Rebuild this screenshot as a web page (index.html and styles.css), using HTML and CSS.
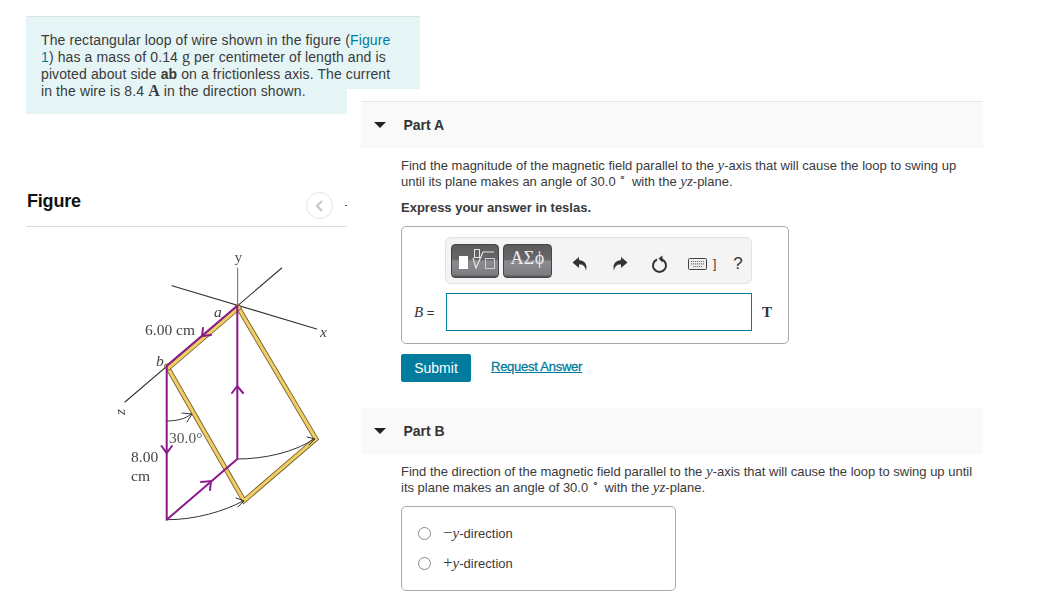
FILE: index.html
```html
<!DOCTYPE html>
<html lang="en">
<head>
<meta charset="utf-8">
<title>Rectangular loop of wire</title>
<link rel="stylesheet" href="styles.css">
</head>
<body>
<div class="page">
  <aside class="left">
    <div class="intro">The rectangular loop of wire shown in the figure (<a class="fig-link" href="#">Figure 1</a>) has a mass of 0.14 <span class="unit">g</span> per centimeter of length and is pivoted about side <b>ab</b> on a frictionless axis. The current in the wire is 8.4 <span class="unit bold">A</span> in the direction shown.</div>
    <div class="fig-head">
      <h2 class="fig-title">Figure</h2>
      <div class="fig-nav">
        <span class="circle-btn">
          <svg width="12" height="14" viewBox="0 0 12 14"><path d="M8 2 3 7l5 5" fill="none" stroke="#c4c4c4" stroke-width="2"/></svg>
        </span>
        <span class="next-dot"></span>
      </div>
    </div>
    <svg class="figure" width="321" height="372" viewBox="26 228 321 372">
      <g fill="none" stroke-linecap="round">
        <path d="M172 286.7 316.7 330" stroke="#333" stroke-width="1.1"/>
        <path d="M281.7 269 125 403" stroke="#333" stroke-width="1.1"/>
        <path d="M237.6 269V306" stroke="#777" stroke-width="1.1"/>
        <path d="M237.3 307 316 440 244 501.7 166.7 367" stroke="#6b5a2a" stroke-width="4.800" stroke-linejoin="miter"/>
        <path d="M237.3 307 316 440 244 501.7 166.7 367" stroke="#f0ce64" stroke-width="3.200" stroke-linejoin="miter"/>
        <path d="M239 308.500 168.500 369" stroke="#6b5a2a" stroke-width="4.800"/>
        <path d="M239 308.500 168.500 369" stroke="#f0ce64" stroke-width="3.200"/>
        <path d="M237.3 460C265 460 295 453 314 440" stroke="#333" stroke-width="1"/>
        <path d="M307 438 315 440 309 446" stroke="#333" stroke-width="1"/>
        <path d="M166.7 520.7C195 521 225 512 243 502" stroke="#333" stroke-width="1"/>
        <path d="M236 499 244 501.7 238 508" stroke="#333" stroke-width="1"/>
        <path d="M166.7 422C176 422 186 420 191 415" stroke="#333" stroke-width="1"/>
        <path d="M182 414 192 415 187 423" stroke="#333" stroke-width="1"/>
        <g stroke="#8c1a8c" stroke-width="2">
          <path d="M237.3 306.7 166.7 366.7V520.7L237.3 460V306.7" stroke-linejoin="round"/>
          <path d="M203 329 202 337 211 336"/>
          <path d="M161.500 447 166.700 454 172 447"/>
          <path d="M201 483 211 482 210 491"/>
          <path d="M232 394 237.300 387 243 394"/>
        </g>
      </g>
      <g class="fig-text">
        <text x="234.500" y="263" class="gray">y</text>
        <text x="320" y="338" class="ital">x</text>
        <text x="214" y="318" class="ital">a</text>
        <text x="145" y="336">6.00 cm</text>
        <text x="156" y="367" class="ital">b</text>
        <text x="0" y="0" class="ital" transform="translate(125 416) rotate(-90)">z</text>
        <text x="169" y="444" class="gray">30.0°</text>
        <text x="131" y="463">8.00</text>
        <text x="131" y="482">cm</text>
      </g>
    </svg>
  </aside>

  <main class="right">
    <section class="part">
      <header class="part-head part-head-first">
        <span class="caret"></span>
        <h3 class="part-title">Part A</h3>
      </header>
      <div class="part-body">
        <p class="prompt">Find the magnitude of the magnetic field parallel to the <i class="m">y</i>-axis that will cause the loop to swing up until its plane makes an angle of 30.0 <sup class="deg">∘</sup> with the <i class="m">yz</i>-plane.</p>
        <p class="hint">Express your answer in teslas.</p>
        <div class="answer">
          <div class="toolbar">
            <button class="tool-btn tool-math" type="button" aria-label="Templates">
              <svg width="46" height="32" viewBox="0 0 46 32">
                <rect x="7" y="11" width="9" height="13" fill="#fff"/>
                <rect x="22.500" y="4.500" width="5" height="8" fill="none" stroke="#e8e8e8"/>
                <path d="M21 13l3 10 7-16H42" fill="none" stroke="#e8e8e8" stroke-width="1.200"/>
                <rect x="33.500" y="13.500" width="9" height="10" fill="none" stroke="#cfcfcf"/>
              </svg>
            </button>
            <button class="tool-btn tool-greek" type="button">ΑΣϕ</button>
            <span class="tool-icons">
              <svg class="ic-undo" width="16" height="16" viewBox="0 0 16 16"><path d="M7 1 .5 6.500 7 12V8.500c3.500-.5 6 1 7 6 1.500-5-.5-10-7-10.500z" fill="#333"/></svg>
              <svg class="ic-redo" width="16" height="16" viewBox="0 0 16 16"><path d="M9 1l6.500 5.500L9 12V8.500c-3.500-.5-6 1-7 6-1.500-5 .5-10 7-10.500z" fill="#333"/></svg>
              <svg class="ic-reset" width="18" height="18" viewBox="0 0 18 18"><path d="M6 4.500a6.500 6.500 0 1 0 5 0" fill="none" stroke="#333" stroke-width="2"/><path d="M11.500 .5v7L7.500 3.500z" fill="#333"/></svg>
              <svg class="ic-keys" width="19" height="12" viewBox="0 0 19 12"><rect x=".5" y=".5" width="18" height="11" rx="1" fill="#eee" stroke="#444"/><path d="M3 3.500h13M3 5.800h13M5 8.500h9" stroke="#777" stroke-width="1.200" stroke-dasharray="1.200 .8"/></svg>
              <span class="ic-bracket">]</span>
              <span class="ic-help">?</span>
            </span>
          </div>
          <div class="answer-row">
            <label class="answer-label"><i class="m big">B</i> =</label>
            <input class="answer-input" type="text" aria-label="B">
            <span class="answer-unit">T</span>
          </div>
        </div>
        <div class="actions">
          <button class="submit" type="button">Submit</button>
          <a class="request" href="#">Request Answer</a>
        </div>
      </div>
    </section>

    <section class="part part-b">
      <header class="part-head">
        <span class="caret"></span>
        <h3 class="part-title">Part B</h3>
      </header>
      <div class="part-body">
        <p class="prompt">Find the direction of the magnetic field parallel to the <i class="m">y</i>-axis that will cause the loop to swing up until its plane makes an angle of 30.0 <sup class="deg">∘</sup> with the <i class="m">yz</i>-plane.</p>
        <div class="choices">
          <label class="choice"><span class="radio"></span><span><span class="m-up">−</span><i class="m">y</i>-direction</span></label>
          <label class="choice"><span class="radio"></span><span><span class="m-up">+</span><i class="m">y</i>-direction</span></label>
        </div>
      </div>
    </section>
  </main>
</div>
</body>
</html>
```
FILE: styles.css
```css
* { box-sizing: border-box; }
html, body { margin: 0; height: 600px; overflow: hidden; background: #fff; }
body { font-family: "Liberation Sans", Arial, sans-serif; font-size: 14px; color: #333; }

.page { display: flex; align-items: flex-start; padding-left: 26px; }

/* left column */
.left { width: 321px; flex: none; padding-top: 16px; }
.intro {
  width: 394px;
  padding: 15px 26px 14px 15px;
  background: #e5f5f6;
  border-top: 1px solid #dde3e4;
  line-height: 17px;
  letter-spacing: .11px;
  color: #3a3a3a;
}
.fig-link { color: #007c9e; text-decoration: none; }
.unit { font-family: "Liberation Serif", serif; font-size: 16px; line-height: 0; }
.unit.bold { font-weight: bold; }
.fig-head {
  display: flex;
  justify-content: space-between;
  height: 40px;
  margin-top: 73px;
  border-bottom: 1px solid #dcdcdc;
}
.fig-title { margin: 0 0 0 1px; font-size: 18px; line-height: 28px; font-weight: bold; letter-spacing: -.2px; color: #111; }
.fig-nav { display: flex; align-items: flex-start; padding-top: 5px; gap: 12px; }
.circle-btn {
  width: 27px; height: 27px;
  display: flex; align-items: center; justify-content: center;
  border: 1px solid #e4e4e4; border-radius: 50%;
}
.next-dot { width: 2px; height: 1px; margin-top: 13px; background: #555; }
.figure { display: block; filter: blur(.3px); }
.fig-text text { font-family: "Liberation Serif", serif; font-size: 15.500px; fill: #444; }
.fig-text .ital { font-style: italic; }
.fig-text .gray { fill: #555; }

/* right column */
.right {
  width: 636px; flex: none;
  margin-top: 89px;
  padding: 12px 0 0 14px;
  background: #fff;
  position: relative;
  z-index: 1;
}
.part-head {
  display: flex; align-items: center;
  height: 46px;
  padding-left: 13px;
  background: #f9f9f9;
}
.part-head-first { height: 47px; border-top: 1px solid #e6e6e6; }
.caret {
  width: 0; height: 0;
  border-left: 6px solid transparent;
  border-right: 6px solid transparent;
  border-top: 6px solid #222;
}
.part-title { margin: 0 0 0 17.500px; font-size: 14px; font-weight: bold; color: #333; }
.part-body { padding-left: 40px; }
.part-b { margin-top: 26px; }
.prompt { margin: 10px 0 0; font-size: 13px; line-height: 16px; color: #3a3a3a; }
.hint { margin: 10px 0 0; font-size: 13px; line-height: 16px; font-weight: bold; color: #3a3a3a; }
.m { font-family: "Liberation Serif", serif; font-style: italic; font-size: 15px; line-height: 0; }
.m.big { font-size: 15px; }
.deg { margin-right: 2px; font-size: 11px; line-height: 0; font-family: "Liberation Serif", serif; }
.m-up { font-family: "Liberation Serif", serif; font-size: 17px; line-height: 0; }

/* answer box */
.answer {
  width: 388px; height: 118px;
  margin-top: 10px;
  padding: 10px 0 0;
  border: 1px solid #aaa;
  border-radius: 5px;
}
.toolbar {
  display: flex; align-items: center;
  width: 307px; height: 47px;
  margin-left: 43px;
  padding-left: 5px;
  background: #f4f4f4;
  border: 1px solid #e2e2e2;
  border-radius: 6px;
}
.tool-btn {
  height: 34px; padding: 0;
  color: #eee;
  background: linear-gradient(#5b5b5e 0, #68686b 46%, #8b8b90 50%, #7d7d82 92%, #505053 100%);
  border: 1px solid #444;
  border-radius: 4px;
  display: flex; align-items: center; justify-content: center;
}
.tool-math { width: 48px; }
.tool-greek { width: 49px; margin-left: 4px; padding-bottom: 4px; font-family: "Liberation Serif", serif; font-size: 18px; letter-spacing: .4px; }
.tool-icons { display: flex; align-items: center; margin-left: 20px; padding-top: 6px; color: #333; }
.ic-redo { margin-left: 24px; }
.ic-reset { margin-left: 23px; }
.ic-keys { margin-left: 19px; }
.ic-bracket { margin-left: 6px; font-size: 12px; }
.ic-help { margin-left: 17px; font-size: 17px; }
.answer-row { display: flex; align-items: center; margin-top: 9px; }
.answer-label { width: 44px; padding-left: 12px; font-size: 13px; color: #333; }
.answer-input {
  width: 306px; height: 38px; padding: 0;
  border: 1px solid #007c9e;
  background: #fff;
  outline: none;
}
.answer-unit { margin-left: 10px; font-family: "Liberation Serif", serif; font-weight: bold; font-size: 15px; color: #333; }

.actions { display: flex; align-items: center; margin-top: 10px; }
.submit {
  width: 70px; height: 28px; padding: 0;
  background: #007c9e; color: #fff;
  border: 0; border-radius: 2px;
  font: 14px "Liberation Sans", Arial, sans-serif;
}
.request { margin: -3px 0 0 20px; font-size: 13px; letter-spacing: -.25px; -webkit-text-stroke: .3px #007c9e; color: #007c9e; text-decoration: underline; }

/* choices */
.choices {
  width: 275px; height: 85px;
  margin-top: 10px;
  padding-top: 11px;
  border: 1px solid #aaa;
  border-radius: 5px;
}
.choice { display: flex; align-items: center; height: 30px; padding-left: 16px; font-size: 13px; color: #3a3a3a; }
.radio { width: 13px; height: 13px; margin-right: 12px; border: 1px solid #8a8a8a; border-radius: 50%; background: #fff; }
```
